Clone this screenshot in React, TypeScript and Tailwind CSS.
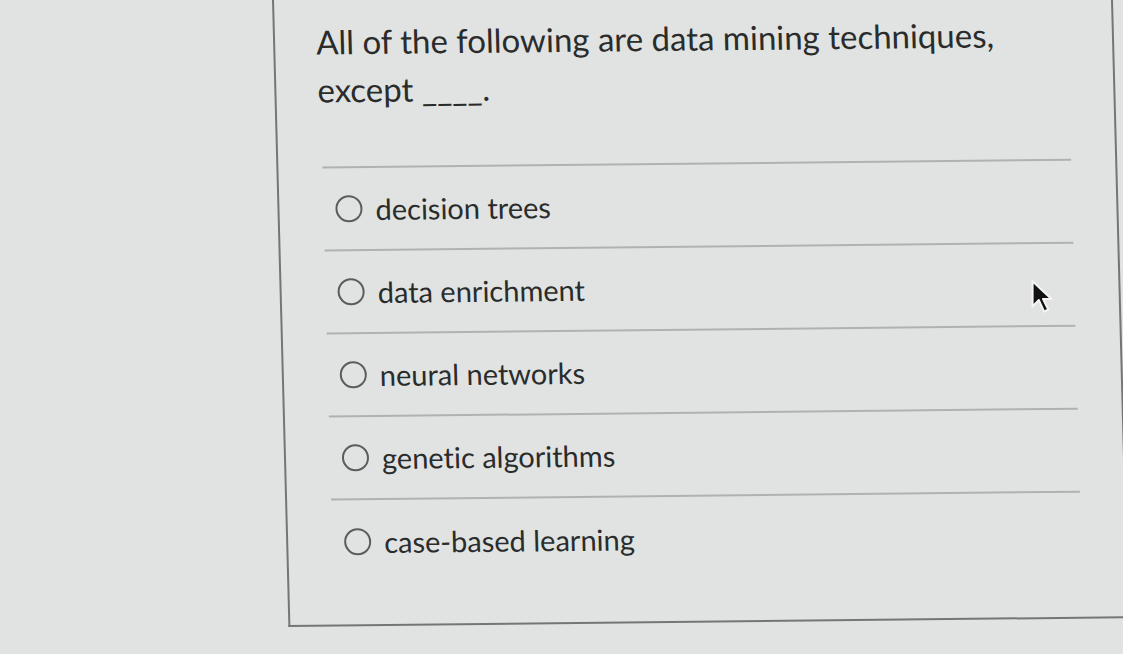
const options = [
  "decision trees",
  "data enrichment",
  "neural networks",
  "genetic algorithms",
  "case-based learning",
];

function Cursor() {
  return (
    <svg
      className="absolute left-[1027px] top-[277px]"
      width="30"
      height="42"
      viewBox="0 0 28 40"
    >
      <path
        d="M5 4 L5 28 L11 22 L16 33 L20 31 L15 21 L23 21 Z"
        fill="#111"
        stroke="#f4f4f4"
        strokeWidth="2"
        strokeLinejoin="round"
      />
    </svg>
  );
}

export default function App() {
  return (
    <div className="relative h-[654px] w-[1123px] overflow-hidden bg-[#e1e3e2] font-['Lato',sans-serif] text-[#2a2c2c] [font-variant-ligatures:none]">
      <div className="ml-[272px] h-[627px] w-[841px] origin-top-left -skew-y-[0.6deg] skew-x-[1.5deg] border-x-2 border-b-2 border-[#737675] px-11 pt-[18px]">
        <p className="-ml-[3px] text-[33px] leading-[48px]">
          All of the following are data mining techniques,
          <br />
          except ____.
        </p>
        <div className="mt-[53px] border-t-2 border-[#b0b2b1]">
          {options.map((label, i) => (
            <div
              key={label}
              className={
                i < options.length - 1
                  ? "flex h-[83px] items-center gap-[13px] border-b-2 border-[#b0b2b1] pl-3"
                  : "flex h-[83px] items-center gap-[13px] pl-3"
              }
            >
              <span className="h-[27px] w-[27px] shrink-0 rounded-full border-2 border-[#5b5d5d]" />
              <span className="text-[29px] leading-none">{label}</span>
            </div>
          ))}
        </div>
      </div>
      <Cursor />
    </div>
  );
}
